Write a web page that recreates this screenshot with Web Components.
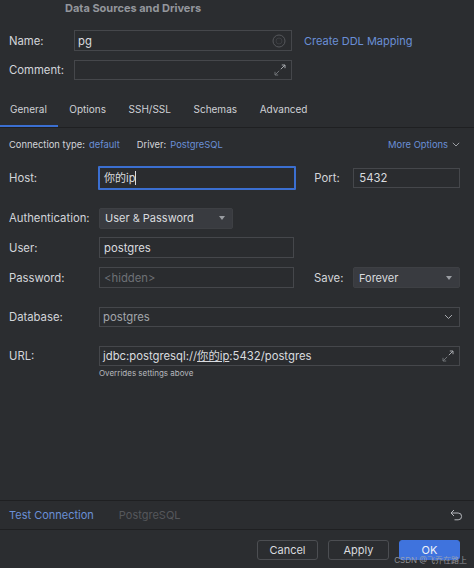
<!DOCTYPE html>
<html><head><meta charset="utf-8">
<style>
html,body{margin:0;padding:0;background:#2b2d30;width:474px;height:568px;overflow:hidden}
body{font:12px/16px Inter,"Noto Sans CJK SC",sans-serif;color:#d5d7dc}
</style></head><body>
<ds-dialog></ds-dialog>
<template id="ic-expand"><svg width="12" height="12" viewBox="0 0 12 12" fill="none" stroke="#8b8e94" stroke-width="1"><path d="M6.8 5.2 11 1M7.8 1H11V4.2" stroke="#a5a8ad"/><path d="M5.2 6.8 1 11M1 7.8V11H4.2" stroke="#6f7277"/></svg></template>
<script>
const expand=()=>document.getElementById('ic-expand').innerHTML;
function def(name,css,html){customElements.define(name,class extends HTMLElement{
  connectedCallback(){if(this.shadowRoot)return;const r=this.attachShadow({mode:'open'});
  r.innerHTML='<style>'+css+'</style>'+(typeof html==='function'?html(this):html);}
});}
def('ds-row',`:host{display:flex;align-items:center;position:relative}
 ::slotted(ds-label){flex:none}`,`<slot></slot>`);
def('ds-label',`:host{display:block;font-size:11.3px;color:#d3d5da;white-space:nowrap}`,`<slot></slot>`);
def('ds-link',`:host{display:inline-block;color:#6a8fd6;white-space:nowrap}`,`<slot></slot>`);
def('ds-input',`:host{display:flex;align-items:center;box-sizing:border-box;border:1px solid #45474b;background:#2a2c2f;color:#d9dbdf;font-size:11.3px;padding:0 3px 0 3px;height:21px;min-width:0;white-space:nowrap}
 :host([focused]){border:2px solid #3b6fd1;border-radius:1px;padding-left:4px;background:#2a2c2f;font-size:11px}
 :host([muted]){color:#6e7176}
 :host([dim]){color:#a3a6ab}
 .t{flex:1;min-width:0}
 .end{display:flex;flex:none;align-items:center}`,`<span class="t"><slot></slot></span><span class="end"><slot name="end"></slot></span>`);
def('ds-combo',`:host{display:flex;align-items:center;justify-content:space-between;box-sizing:border-box;border:1px solid #3e4044;background:#393b40;border-radius:2px;color:#d9dbdf;font-size:11px;height:21px;padding:0 3px 0 5px;white-space:nowrap}
 i{width:0;height:0;border-left:3.5px solid transparent;border-right:3.5px solid transparent;border-top:4px solid #9a9da2;margin-right:4px}`,`<slot></slot><i></i>`);
def('ds-tabs',`:host{display:flex;height:34px;border-bottom:1px solid #1f2022;box-sizing:content-box;font-size:10px;color:#cfd1d6}
 .tab{display:flex;align-items:center;height:34px;box-sizing:border-box;padding:0 11.3px 2px;white-space:nowrap}
 .tab.on{padding:0 0 0 10px;width:58px;border-bottom:2px solid #3b6fd1}`,
 `<div class="tab on">General</div><div class="tab">Options</div><div class="tab">SSH/SSL</div><div class="tab">Schemas</div><div class="tab">Advanced</div>`);
def('ds-button',`:host{display:flex;align-items:center;justify-content:center;box-sizing:border-box;width:61px;height:20px;border:1px solid #4c4e52;border-radius:3px;color:#d9dbdf;font-size:11px;line-height:10px}
 :host([primary]){background:#3f73dd;border-color:#3f73dd;color:#eef1f7}`,`<slot></slot>`);
def('ds-dialog',`:host{display:flex;flex-direction:column;width:474px;height:568px;position:relative;overflow:hidden;background:#2b2d30;font:12px/16px Inter,"Noto Sans CJK SC",sans-serif}
 .title{padding:0 0 0 65px;height:16px;font-size:11px;font-weight:700;color:#93969c}
 .head{padding:14px 0 0 9px;display:flex;flex-direction:column;gap:9px}
 .lab{width:65px}
 .lab2{width:90px}
 .w218{width:218px}
 .conn{display:flex;align-items:center;height:17px;margin-top:8px;padding:0 14px 0 9px;font-size:9.4px}
 .conn ds-label{font-size:9.4px}
 .conn .sp{flex:1}
 .form{padding:0 14px 0 9px;display:flex;flex-direction:column}
 .grow{flex:1}
 .foot1{border-top:1px solid #1f2022;border-bottom:1px solid #1f2022;height:30px;display:flex;align-items:center;padding:0 11px 0 9px;box-sizing:border-box;margin-top:auto}
 .foot2{display:flex;justify-content:flex-end;gap:10px;padding:10px 14px 8px 0}
 .wm{position:absolute;right:7px;bottom:4px;font-size:8px;line-height:8px;color:#a9abb0;opacity:.8;white-space:nowrap}
 .hint{font-size:8px;line-height:10px;color:#b6b8bd;margin:2px 0 0 90px}
 u{text-underline-offset:1px}
 .caret{display:inline-block;width:1px;height:14px;background:#d9dbdf;vertical-align:-3px}
 svg{display:block}`,
 ()=>`
 <div class="title">Data Sources and Drivers</div>
 <div class="head">
  <ds-row style="height:21px"><ds-label class="lab">Name:</ds-label>
   <ds-input class="w218">pg<svg slot="end" width="14" height="14" viewBox="0 0 14 14" fill="none" style="margin-right:2px"><circle cx="7" cy="7" r="6" stroke="#55575b"/><circle cx="7" cy="7" r="3" stroke="#3c3e42"/></svg></ds-input>
   <ds-link style="margin-left:12px;font-size:11px">Create DDL Mapping</ds-link></ds-row>
  <ds-row style="height:20px"><ds-label class="lab">Comment:</ds-label>
   <ds-input class="w218" style="height:20px"><span slot="end" style="margin-right:2px">${expand()}</span></ds-input></ds-row>
 </div>
 <ds-tabs style="margin-top:13px"></ds-tabs>
 <div class="conn"><ds-label>Connection type:</ds-label><ds-link style="margin-left:4px">default</ds-link>
  <ds-label style="margin-left:17px">Driver:</ds-label><ds-link style="margin-left:4px">PostgreSQL</ds-link>
  <span class="sp"></span><ds-link>More Options</ds-link>
  <svg width="8" height="5" viewBox="0 0 8 5" fill="none" stroke="#9a9da2" style="margin-left:4px"><path d="M.8.8 4 4 7.2.8"/></svg></div>
 <div class="form">
  <ds-row style="margin-top:13px;height:24px"><ds-label class="lab2" style="width:89px">Host:</ds-label>
   <ds-input focused style="width:199px;height:24px">你的ip<span class="caret"></span></ds-input>
   <ds-label style="margin-left:18px;width:39px">Port:</ds-label>
   <ds-input style="width:107px;height:20px;padding-left:5px">5432</ds-input></ds-row>
  <ds-row style="margin-top:18px;height:20px"><ds-label class="lab2">Authentication:</ds-label>
   <ds-combo style="width:134px">User &amp; Password</ds-combo></ds-row>
  <ds-row style="margin-top:9px"><ds-label class="lab2">User:</ds-label>
   <ds-input style="width:195px;padding-left:4px">postgres</ds-input></ds-row>
  <ds-row style="margin-top:9px"><ds-label class="lab2">Password:</ds-label>
   <ds-input muted style="width:195px;padding-left:4px">&lt;hidden&gt;</ds-input>
   <ds-label style="margin-left:20px;width:39px">Save:</ds-label>
   <ds-combo style="width:107px">Forever</ds-combo></ds-row>
  <ds-row style="margin-top:19px;height:20px"><ds-label class="lab2">Database:</ds-label>
   <ds-input dim class="grow" style="height:20px">postgres<svg slot="end" width="9" height="6" viewBox="0 0 9 6" fill="none" stroke="#a5a8ad" style="margin-right:3px"><path d="M1 1 4.5 4.5 8 1"/></svg></ds-input></ds-row>
  <ds-row style="margin-top:19px;height:20px"><ds-label class="lab2">URL:</ds-label>
   <ds-input class="grow" style="height:20px">jdbc:postgresql://<u>你的ip</u>:5432/postgres<span slot="end" style="margin-right:2px">${expand()}</span></ds-input></ds-row>
  <div class="hint">Overrides settings above</div>
 </div>
 <div class="foot1"><ds-link style="font-size:11px">Test Connection</ds-link>
  <span style="margin-left:25px;font-size:11px;color:#55575b">PostgreSQL</span><span class="grow"></span>
  <svg width="13" height="12" viewBox="0 0 13 12" fill="none" stroke="#b5b7bc" stroke-width="1"><path d="M4 1 1 4l3 3"/><path d="M1.2 4H8.2a3.4 3.4 0 0 1 0 6.8H4.5"/></svg></div>
 <div class="foot2"><ds-button>Cancel</ds-button><ds-button>Apply</ds-button><ds-button primary>OK</ds-button></div>
 <div class="wm">CSDN @飞乔在路上</div>`);
</script>
</body></html>
